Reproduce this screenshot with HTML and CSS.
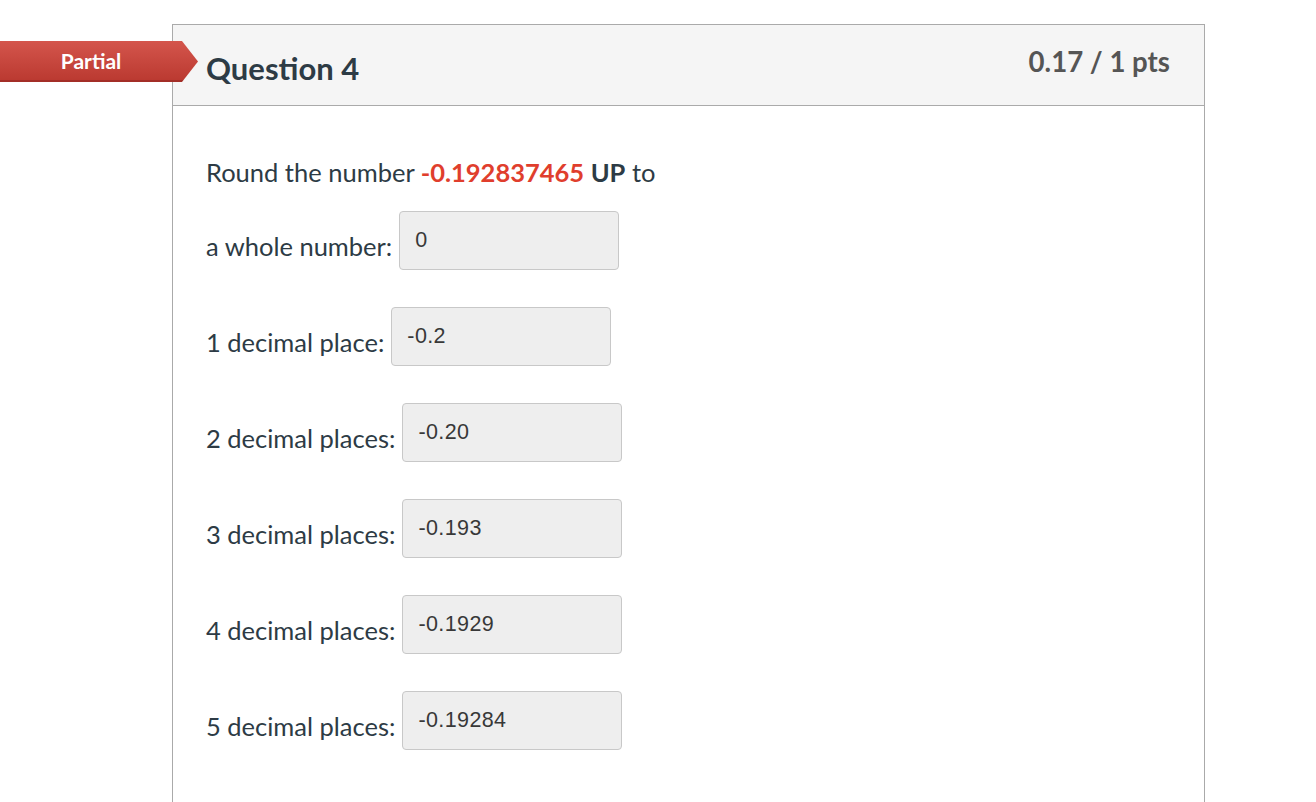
FILE: index.html
```html
<!DOCTYPE html>
<html>
<head>
    <title>Question 4</title>
    <link rel="stylesheet" href="styles.css">
</head>
<body>
    <div class="page">
        <div class="badge">Partial</div>

        <div class="question">
            <div class="q-header">
                <span class="q-title">Question 4</span>
                <span class="q-points">0.17 / 1 pts</span>
            </div>

            <div class="q-body">
                <p class="q-text">Round the number <strong class="hl">-0.192837465</strong> <strong>UP</strong> to</p>

                <div class="row"><span class="lbl">a whole number:</span><input class="ans" type="text" value="0" disabled></div>
                <div class="row"><span class="lbl">1 decimal place:</span><input class="ans" type="text" value="-0.2" disabled></div>
                <div class="row"><span class="lbl">2 decimal places:</span><input class="ans" type="text" value="-0.20" disabled></div>
                <div class="row"><span class="lbl">3 decimal places:</span><input class="ans" type="text" value="-0.193" disabled></div>
                <div class="row"><span class="lbl">4 decimal places:</span><input class="ans" type="text" value="-0.1929" disabled></div>
                <div class="row"><span class="lbl">5 decimal places:</span><input class="ans" type="text" value="-0.19284" disabled></div>
            </div>
        </div>
    </div>
</body>
</html>
```

FILE: styles.css
```css
body { margin: 0; background: #fff; font-family: Lato, "Open Sans", sans-serif; color: #2d3b45; }
.page { position: relative; padding: 24px 0 0 172px; height: 778px; overflow: hidden; }

.badge { position: absolute; left: 0; top: 41px; width: 198px; height: 41px; box-sizing: border-box; padding-right: 16px;
    background: linear-gradient(#d4554c, #bb3a31); border-bottom: 2px solid #a32e27;
    clip-path: polygon(0 0, 182px 0, 198px 50%, 182px 100%, 0 100%);
    color: #fff; font-weight: bold; font-size: 21px; line-height: 40px; text-align: center; }

.question { width: 1033px; min-height: 900px; box-sizing: border-box; border: 1px solid #aaa; border-bottom: none; }
.q-header { height: 80px; display: flex; justify-content: space-between; align-items: flex-start; padding: 0 34px 0 33px;
    background: #f5f5f5; border-bottom: 1px solid #aaa; }
.q-title { margin-top: 25px; font-size: 31px; font-weight: bold; line-height: 36px; }
.q-points { margin-top: 20px; font-size: 27.6px; font-weight: bold; line-height: 33px; color: #555; }

.q-body { padding: 51px 33px 0; font-size: 25.5px; }
.q-text { margin: 0 0 24px; line-height: 30px; }
.hl { color: #e03e2d; }

.row { display: flex; align-items: flex-end; gap: 7px; margin-bottom: 37px; }
.lbl { line-height: 30px; padding-bottom: 9px; }
.ans { width: 220px; height: 59px; box-sizing: border-box; margin: 0; padding: 0 15px 1px; border: 1px solid #c8c8c8; border-radius: 4px;
    background: #eee; font-family: "Liberation Sans", Arial, sans-serif; font-size: 21.5px; letter-spacing: 0.4px; color: #383838; -webkit-text-fill-color: #383838; opacity: 1; }
```
